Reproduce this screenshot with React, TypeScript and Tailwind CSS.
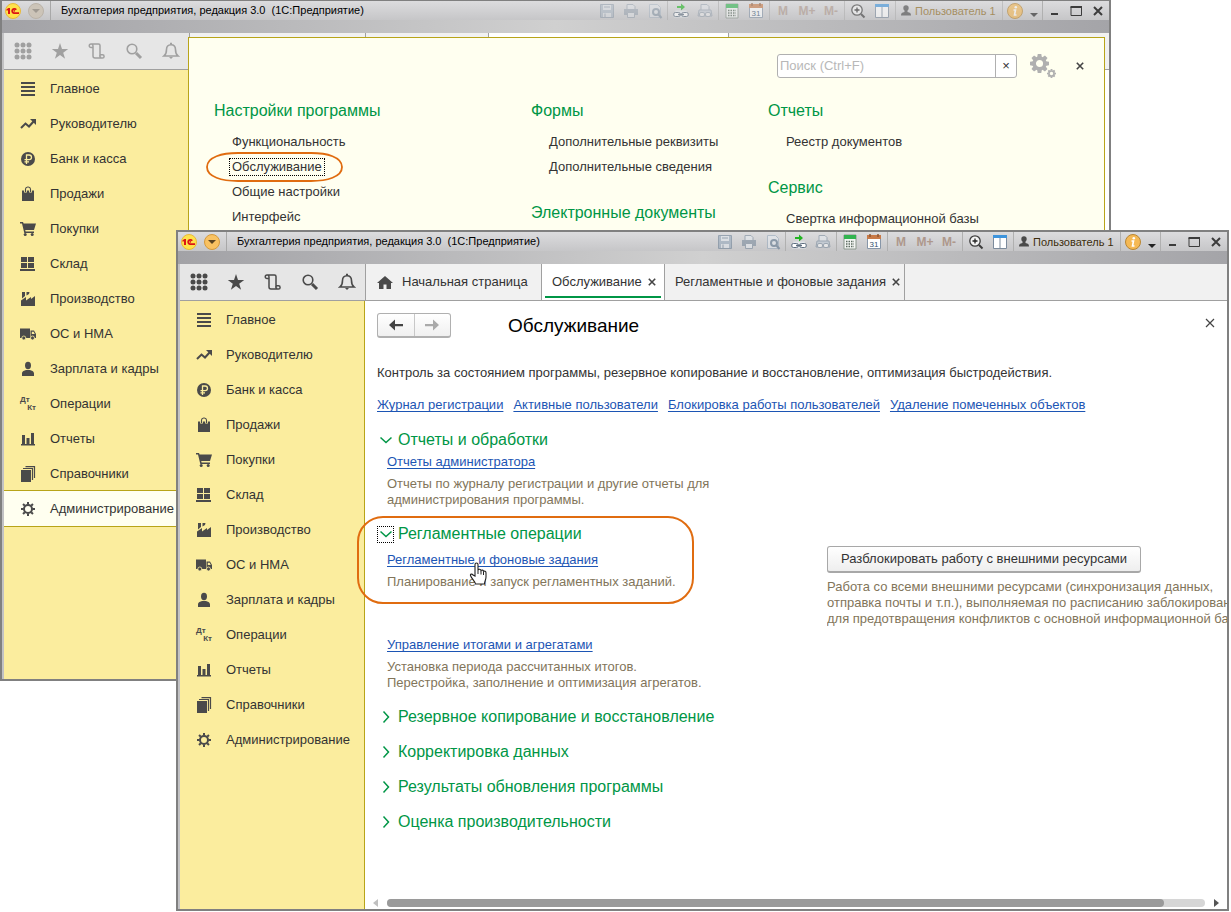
import type { ReactNode } from "react";
import clsx from "clsx";

const ICON = "#4a4a4a";

const menuItems = [
    "Главное",
    "Руководителю",
    "Банк и касса",
    "Продажи",
    "Покупки",
    "Склад",
    "Производство",
    "ОС и НМА",
    "Зарплата и кадры",
    "Операции",
    "Отчеты",
    "Справочники",
    "Администрирование",
];

const gearTeeth = [0, 45, 90, 135, 180, 225, 270, 315];

function MenuIcon({ name }: { name: string }) {
    if (name === "Операции") {
        return (
            <span className="w-4 h-4 shrink-0 flex flex-col text-[8px] leading-[8px] font-bold text-[#4a4a4a]">
                <span>Дт</span>
                <span className="self-end">Кт</span>
            </span>
        );
    }
    const shapes: Record<string, ReactNode> = {
        Главное: <path d="M1 1h14v2H1zM1 5h14v2H1zM1 9h14v2H1zM1 13h14v2H1z" />,
        Руководителю: (
            <>
                <path
                    d="M1 12 5.5 7.5 9 10.5 14 5"
                    fill="none"
                    stroke={ICON}
                    strokeWidth="2"
                />
                <path d="M10 3h6v6z" />
            </>
        ),
        "Банк и касса": (
            <>
                <circle cx="8" cy="8" r="7" />
                <path
                    d="M6.5 13V4h2.7a2.2 2.2 0 0 1 0 4.6H4.5M4.5 10.8H9"
                    fill="none"
                    stroke="#fbed9e"
                    strokeWidth="1.3"
                />
            </>
        ),
        Продажи: (
            <>
                <path d="M2 4.500h12V15H2z" />
                <path
                    d="M5.500 6.500V3a2 2 0 0 1 2-2h1a2 2 0 0 1 2 2v3.500"
                    fill="none"
                    stroke="#fbed9e"
                    strokeWidth="2.800"
                />
                <path
                    d="M5.500 6V3a2.200 2.200 0 0 1 2.200-2h.6a2.200 2.200 0 0 1 2.200 2v3"
                    fill="none"
                    stroke={ICON}
                    strokeWidth="1.100"
                />
            </>
        ),
        Покупки: (
            <>
                <path d="M0 1h3l.6 1.5H16L14 9H5.2l.4 1.5H14V12H4.3L2 2.5H0z" />
                <circle cx="5.2" cy="13.6" r="1.5" />
                <circle cx="12.2" cy="13.6" r="1.5" />
            </>
        ),
        Склад: <path d="M1 1h6v5H1zM8 1h6v5H8zM1 7h6v5H1zM8 7h6v5H8zM0 13h15v2H0z" />,
        Производство: (
            <path d="M1 15V9.500L6 6v3.500L11 6v2l4-3v10zM2 1h3v4L2 7.500zM6.500 1h3l-.5 2-2.500 1.500z" />
        ),
        "ОС и НМА": (
            <>
                <path d="M0 2.500h10V12H0zM10.500 4.500h3.500l2 3.500v4h-5.500z" />
                <path d="M11.800 5.800h1.800L14.800 8h-3z" fill="#fbed9e" />
                <circle cx="3.800" cy="12" r="2" stroke="#fbed9e" strokeWidth=".8" />
                <circle cx="12.500" cy="12" r="2" stroke="#fbed9e" strokeWidth=".8" />
            </>
        ),
        "Зарплата и кадры": (
            <>
                <ellipse cx="8" cy="4.500" rx="3" ry="3.700" />
                <path d="M2 15v-2.500C2 10 4.500 9.500 6 9h4c1.500.5 4 1 4 3.500V15z" />
            </>
        ),
        Отчеты: <path d="M2 4h3v9H2zM6.500 7h3v6h-3zM11 2h3v11h-3zM1 13h14v1.500H1z" />,
        Справочники: (
            <>
                <path d="M1 4h10v12H1z" />
                <path
                    d="M3 2.500h9.500V14M5.500.6h9V12"
                    fill="none"
                    stroke={ICON}
                    strokeWidth="1.200"
                />
            </>
        ),
        Администрирование: (
            <>
                <circle cx="8" cy="8" r="4" fill="none" stroke={ICON} strokeWidth="2" />
                {gearTeeth.map((a) => (
                    <path key={a} d="M7 1h2v2.500H7z" transform={`rotate(${a} 8 8)`} />
                ))}
            </>
        ),
    };
    return (
        <svg viewBox="0 0 16 16" className="w-4 h-4 shrink-0" fill={ICON}>
            {shapes[name]}
        </svg>
    );
}

function LogoIcon() {
    return (
        <svg viewBox="0 0 16 16" className="w-4 h-4 shrink-0">
            <circle cx="8" cy="8" r="7.500" fill="#ffe24a" stroke="#e8b93a" />
            <path d="M1.500 6.300 3.500 5H5v6H3V7.200l-1.500.6z" fill="#dc1414" />
            <path
                d="M11.200 6.800A2.200 2.200 0 1 0 9 10.200h5"
                fill="none"
                stroke="#dc1414"
                strokeWidth="1.800"
            />
            <circle cx="9.300" cy="7.900" r=".8" fill="#dc1414" />
        </svg>
    );
}

function SmallSvg({ children }: { children: ReactNode }) {
    return (
        <svg viewBox="0 0 16 16" className="w-4 h-4" fill="none">
            {children}
        </svg>
    );
}

const printer = (
    <>
        <path d="M4 6V1.500h6l2 2V6" fill="#e8eef4" stroke="#6b7f93" />
        <path d="M1 6h14v6H1z" fill="#6b7f93" />
        <path d="M4.500 9.500h7v5h-7z" fill="#e8eef4" stroke="#6b7f93" />
    </>
);

function BarButton({
    label,
    dim,
    narrow,
    children,
}: {
    label: string;
    dim?: boolean;
    narrow?: boolean;
    children: ReactNode;
}) {
    return (
        <button
            type="button"
            aria-label={label}
            className={clsx(
                "h-full flex items-center justify-center",
                narrow ? "w-[22px]" : "w-6",
                dim && "opacity-50",
            )}
        >
            {children}
        </button>
    );
}

function BarGroup({ children }: { children: ReactNode }) {
    return (
        <div className="h-full flex items-center border-l border-[#b0b0b0] px-px">
            {children}
        </div>
    );
}

function TitleBar({ active }: { active: boolean }) {
    return (
        <header className="shrink-0">
            <div className="h-[19px] flex items-center bg-linear-to-b from-[#dcdcde] to-[#c6c6c8]">
                <div className="flex items-center gap-[7px] pl-[3px] pr-1.5 h-full">
                    <LogoIcon />
                    <button
                        type="button"
                        aria-label="Главное меню"
                        className={clsx(
                            "w-4 h-4 rounded-full border flex items-center justify-center",
                            active
                                ? "bg-[#f9c262] border-[#d59a3c]"
                                : "bg-[#ccc4b8] border-[#bbb3a8]",
                        )}
                    >
                        <svg viewBox="0 0 8 4" className="w-2 h-1">
                            <path d="M0 0h8L4 4z" fill={active ? "#5c4420" : "#a09a92"} />
                        </svg>
                    </button>
                </div>
                <h1 className="flex-1 min-w-0 h-full border-l border-[#a8a8a8] pl-[10px] text-[11px] leading-[19px] whitespace-pre text-black">
                    Бухгалтерия предприятия, редакция 3.0  (1С:Предприятие)
                </h1>
                <div className="flex items-center h-full">
                    <div className={clsx("flex items-center h-full", !active && "opacity-60")}>
                        <BarButton label="Сохранить" dim>
                            <SmallSvg>
                                <path d="M1.500 1.500h13v13h-13z" fill="#8ca2b8" stroke="#5a728a" />
                                <path d="M4 2h8v5H4zM4 10h8v4H4z" fill="#e4ebf2" />
                                <path d="M5 4h6M6 10.500V14" stroke="#5a728a" />
                            </SmallSvg>
                        </BarButton>
                        <BarButton label="Печать" dim>
                            <SmallSvg>{printer}</SmallSvg>
                        </BarButton>
                        <BarButton label="Предварительный просмотр" dim>
                            <SmallSvg>
                                <path d="M2.500 1.500h8l3 3v10h-11z" fill="#e8eef4" stroke="#8ca2b8" />
                                <circle cx="9" cy="9" r="3" stroke="#48647f" strokeWidth="2" />
                                <path d="m11 11 3.500 4" stroke="#48647f" strokeWidth="2" />
                            </SmallSvg>
                        </BarButton>
                        <BarGroup>
                            <BarButton label="Получить ссылку">
                                <SmallSvg>
                                    <path d="M4 3h4V.5L12 4 8 7.500V5H4z" fill="#22b422" />
                                    <path d="M2.500 7.500h11l1.500 7H1z" fill="#e4e8ec" />
                                    <rect x=".8" y="9.500" width="6.400" height="4" rx="1.500" fill="#fff" stroke="#5f6f80" />
                                    <rect x="8.800" y="9.500" width="6.400" height="4" rx="1.500" fill="#fff" stroke="#5f6f80" />
                                    <path d="M5 11.500h6" stroke="#5f6f80" strokeWidth="1.500" />
                                </SmallSvg>
                            </BarButton>
                            <BarButton label="Перейти по ссылке" dim>
                                <SmallSvg>
                                    <path d="M4 7V1.500h6l2 2V7" fill="#e8eef4" stroke="#6b7f93" />
                                    <path d="M2 7h12l1 6H1z" fill="#b8c6d4" stroke="#6b7f93" />
                                    <rect x="2.500" y="9.500" width="5" height="4" rx="1.500" fill="#fff" stroke="#6b7f93" />
                                    <rect x="8.500" y="9.500" width="5" height="4" rx="1.500" fill="#fff" stroke="#6b7f93" />
                                </SmallSvg>
                            </BarButton>
                        </BarGroup>
                        <BarGroup>
                            <BarButton label="Калькулятор">
                                <SmallSvg>
                                    <path d="M2 1h12v14H2z" fill="#f4f6f4" stroke="#8a968c" />
                                    <path d="M2 1h12v4H2z" fill="#32b450" />
                                    <path
                                        d="M4 7.500h8M4 10h8M4 12.500h8"
                                        stroke="#5a6a5e"
                                        strokeWidth="1.400"
                                        strokeDasharray="1.500 1"
                                    />
                                </SmallSvg>
                            </BarButton>
                            <BarButton label="Календарь">
                                <SmallSvg>
                                    <path d="M1.500 2.500h13v12h-13z" fill="#fff" stroke="#8796a8" />
                                    <path d="M1 1h14v4H1z" fill="#c87a48" />
                                    <path d="M4 0v3M12 0v3" stroke="#8d5632" strokeWidth="1.500" />
                                    <text x="8" y="13" textAnchor="middle" fontSize="8" fill="#34506e">
                                        31
                                    </text>
                                </SmallSvg>
                            </BarButton>
                        </BarGroup>
                        <BarGroup>
                            {["M", "M+", "M-"].map((m) => (
                                <BarButton key={m} label={m}>
                                    <span className="text-xs font-bold text-[#ae988c]">{m}</span>
                                </BarButton>
                            ))}
                        </BarGroup>
                        <BarGroup>
                            <BarButton label="Масштаб">
                                <SmallSvg>
                                    <circle cx="7" cy="7" r="5.200" fill="#f4f4f4" stroke="#3c3c3c" strokeWidth="1.300" />
                                    <path d="M4.500 7h5M7 4.500v5" stroke="#222" strokeWidth="1.300" />
                                    <path d="m11 11 3.500 3.500" stroke="#3c3c3c" strokeWidth="2" />
                                </SmallSvg>
                            </BarButton>
                            <BarButton label="Панели">
                                <SmallSvg>
                                    <path d="M1.500 1.500h13v13h-13z" fill="#fff" stroke="#7c8b9c" />
                                    <path d="M1 1h14v3H1z" fill="#3e94dc" />
                                    <path d="M8 4v10" stroke="#7c8b9c" />
                                </SmallSvg>
                            </BarButton>
                        </BarGroup>
                        <BarGroup>
                            <button
                                type="button"
                                className={clsx(
                                    "w-[104px] flex items-center gap-1 pl-1 text-[11px] whitespace-nowrap",
                                    active ? "text-[#3c2d0c]" : "text-[#8a6410]",
                                )}
                            >
                                <svg viewBox="0 0 10 12" className="w-[10px] h-3 shrink-0" fill="#4a4a4a">
                                    <circle cx="5" cy="3" r="2.700" />
                                    <path d="M3.500 5h3v2C9 7.500 10 8 10 10.500H0C0 8 1 7.500 3.500 7z" />
                                </svg>
                                Пользователь 1
                            </button>
                        </BarGroup>
                        <BarGroup>
                            <BarButton label="О программе" narrow>
                                <svg viewBox="0 0 16 16" className="w-4 h-4">
                                    <circle cx="8" cy="8" r="7.500" fill="#f5b955" stroke="#b98632" />
                                    <circle cx="8.800" cy="4.200" r="1.300" fill="#fff" />
                                    <path d="M6.500 7h2L7.500 12H9.500" fill="none" stroke="#fff" strokeWidth="1.600" />
                                </svg>
                            </BarButton>
                            <button type="button" aria-label="Еще" className="w-[15px] h-full flex items-end justify-center pb-[3px]">
                                <svg viewBox="0 0 8 4" className="w-2 h-1">
                                    <path d="M0 0h8L4 4z" fill="#222" />
                                </svg>
                            </button>
                        </BarGroup>
                    </div>
                    <div className="h-full flex items-center border-l border-[#b0b0b0]">
                        <BarButton label="Свернуть" narrow>
                            <SmallSvg>
                                <path d="M5 11h7" stroke="#3c3c3c" strokeWidth="2" />
                            </SmallSvg>
                        </BarButton>
                        <BarButton label="Развернуть" narrow>
                            <SmallSvg>
                                <path d="M3 4h10.500v8.500H3z" stroke="#3c3c3c" />
                                <path d="M2.500 4h11.500" stroke="#3c3c3c" strokeWidth="2" />
                            </SmallSvg>
                        </BarButton>
                        <BarButton label="Закрыть" narrow>
                            <SmallSvg>
                                <path d="m4 4 8 8M12 4l-8 8" stroke="#3c3c3c" strokeWidth="2" />
                            </SmallSvg>
                        </BarButton>
                    </div>
                </div>
            </div>
            <div className="h-[13px] bg-linear-to-r from-[#a2a2a6] via-[#d0d0d0] to-[#a4a4a8]" />
        </header>
    );
}

const toolIcons: { label: string; shape: ReactNode }[] = [
    {
        label: "Меню функций",
        shape: [3, 9, 15].map((y) =>
            [3, 9, 15].map((x) => (
                <circle key={`${x}-${y}`} cx={x} cy={y} r="2.500" fill="currentColor" />
            )),
        ),
    },
    {
        label: "Избранное",
        shape: (
            <path
                d="m9 1 2 6h6.200l-5 3.700 1.900 6L9 13l-5.100 3.700 1.900-6L.8 7H7z"
                fill="currentColor"
            />
        ),
    },
    {
        label: "История",
        shape: (
            <path
                d="M5 5.500H3a1.700 1.700 0 0 1 0-3.500h7.500A1.500 1.500 0 0 1 12 3.500V13M5 5.500V14a2 2 0 0 0 2 2h7.500a1.600 1.600 0 0 0 0-3.200H12M4 2.200A2 2 0 0 1 5 4v2M12 13a2 2 0 0 0 1 2.500"
                fill="none"
                stroke="currentColor"
                strokeWidth="1.500"
            />
        ),
    },
    {
        label: "Поиск",
        shape: (
            <>
                <circle cx="7" cy="7" r="4.800" fill="none" stroke="currentColor" strokeWidth="1.600" />
                <path d="m11 11 5 5" stroke="currentColor" strokeWidth="3" />
            </>
        ),
    },
    {
        label: "Оповещения",
        shape: (
            <>
                <path
                    d="M2 14h14c-2-1.500-2.500-3-2.500-6.500C13.500 4.500 12 2.700 9 2.700S4.500 4.500 4.500 7.500C4.500 11 4 12.500 2 14z"
                    fill="none"
                    stroke="currentColor"
                    strokeWidth="1.600"
                />
                <path d="M8 .8h2v2H8zM7 15h4l-2 2z" fill="currentColor" />
            </>
        ),
    },
];

function ToolIcons({ active }: { active: boolean }) {
    return (
        <div
            className={clsx(
                "w-[185px] shrink-0 flex bg-[#e6e6e6]",
                active ? "text-[#4a4a4a]" : "text-[#a0a0a0]",
            )}
        >
            {toolIcons.map((t) => (
                <button
                    key={t.label}
                    type="button"
                    aria-label={t.label}
                    className="w-[37px] flex items-center justify-center"
                >
                    <svg viewBox="0 0 18 18" className="w-[18px] h-[18px]">
                        {t.shape}
                    </svg>
                </button>
            ))}
        </div>
    );
}

function Sidebar({ selected }: { selected?: string }) {
    return (
        <nav className="w-[185px] shrink-0 bg-[#fbed9e] border-r border-[#b8a419] pt-px">
            {menuItems.map((item) => (
                <a
                    key={item}
                    href="#"
                    className={clsx(
                        "flex items-center gap-3.5 pl-4 whitespace-nowrap",
                        item === selected
                            ? "h-[37px] -my-px bg-[#fffff0] border-y border-[#b8a419]"
                            : "h-[35px]",
                    )}
                >
                    <MenuIcon name={item} />
                    {item}
                </a>
            ))}
        </nav>
    );
}

function AppWindow({
    active,
    selected,
    className,
    tabs,
    children,
}: {
    active: boolean;
    selected?: string;
    className: string;
    tabs: ReactNode;
    children?: ReactNode;
}) {
    return (
        <section
            className={clsx(
                "absolute flex flex-col border-2 border-[#808080] bg-white",
                className,
            )}
        >
            <TitleBar active={active} />
            <div className="relative flex-1 flex flex-col border-l-2 border-[#c2c2c4]">
                <div className="h-[37px] shrink-0 flex border-b border-[#a0a0a0]">
                    <ToolIcons active={active} />
                    <div className="flex-1 flex bg-[#f1f1f1] border-l border-[#a0a0a0]">
                        {tabs}
                    </div>
                </div>
                <div className="flex-1 flex">
                    <Sidebar selected={selected} />
                    {children}
                </div>
            </div>
        </section>
    );
}

function CloseIcon({ bold, small }: { bold?: boolean; small?: boolean }) {
    return (
        <svg viewBox="0 0 10 10" className={small ? "w-2 h-2" : "w-[10px] h-[10px]"}>
            <path
                d="m1 1 8 8M9 1 1 9"
                stroke="#444"
                strokeWidth={bold ? 2 : 1.2}
            />
        </svg>
    );
}

function CommandGroup({
    title,
    items,
    focused,
}: {
    title: string;
    items: string[];
    focused?: string;
}) {
    return (
        <div className="mb-6">
            <h2 className="text-base leading-5 text-[#009646] mb-2">{title}</h2>
            <ul className="pl-[18px]">
                {items.map((item) => (
                    <li key={item} className="relative h-[25px] flex items-center">
                        <a
                            href="#"
                            className={clsx(
                                item === focused &&
                                    "-mx-[3px] px-[2px] border border-dotted border-black leading-4",
                            )}
                        >
                            {item}
                        </a>
                        {item === focused && (
                            <svg
                                viewBox="0 0 137 30"
                                className="absolute -left-[26px] -top-0.5 w-[137px] h-[30px]"
                            >
                                <path
                                    d="M32 1h73c16 0 31 4 31 14s-15 14-31 14H32C16 29 1 25 1 15S16 1 32 1z"
                                    fill="none"
                                    stroke="#e06c10"
                                    strokeWidth="1.800"
                                />
                            </svg>
                        )}
                    </li>
                ))}
            </ul>
        </div>
    );
}

function Gear({ className }: { className: string }) {
    return (
        <svg viewBox="0 0 16 16" className={className} fill="#b0b0b0">
            <circle cx="8" cy="8" r="4.500" fill="none" stroke="#b0b0b0" strokeWidth="3" />
            {gearTeeth.map((a) => (
                <path key={a} d="M6.500 0h3l.5 3H6z" transform={`rotate(${a} 8 8)`} />
            ))}
        </svg>
    );
}

function FunctionsPanel() {
    return (
        <div className="absolute left-[184px] right-1 top-1 h-[400px] bg-[#fffff0] border border-[#b8a419] pl-[25px] pt-4">
            <div className="flex justify-end items-center pr-5">
                <div className="w-[240px] h-6 flex bg-white border border-[#b0b0b0] rounded-[3px]">
                    <input
                        type="text"
                        aria-label="Поиск"
                        placeholder="Поиск (Ctrl+F)"
                        className="flex-1 min-w-0 px-0.5 outline-none placeholder:text-[#b8b8b8]"
                    />
                    <button
                        type="button"
                        aria-label="Очистить"
                        className="w-[21px] border-l border-[#b0b0b0] leading-5"
                    >
                        ×
                    </button>
                </div>
                <button type="button" aria-label="Настройка" className="relative ml-3 w-[27px] h-6">
                    <Gear className="absolute left-px top-0 w-[19px] h-[19px]" />
                    <Gear className="absolute right-0 bottom-0 w-[9px] h-[9px]" />
                </button>
                <button type="button" aria-label="Закрыть" className="ml-5">
                    <CloseIcon bold small />
                </button>
            </div>
            <div className="mt-[23px] grid grid-cols-[317px_237px_1fr]">
                <CommandGroup
                    title="Настройки программы"
                    items={["Функциональность", "Обслуживание", "Общие настройки", "Интерфейс"]}
                    focused="Обслуживание"
                />
                <div>
                    <CommandGroup
                        title="Формы"
                        items={["Дополнительные реквизиты", "Дополнительные сведения"]}
                    />
                    <CommandGroup title="Электронные документы" items={[]} />
                </div>
                <div>
                    <CommandGroup title="Отчеты" items={["Реестр документов"]} />
                    <CommandGroup title="Сервис" items={["Свертка информационной базы"]} />
                </div>
            </div>
        </div>
    );
}

function Link({ children }: { children: ReactNode }) {
    return (
        <a
            href="#"
            className="text-[#1c55b4] underline decoration-1 underline-offset-2 [text-decoration-skip-ink:none] whitespace-nowrap"
        >
            {children}
        </a>
    );
}

function SectionTitle({
    open,
    focused,
    children,
}: {
    open?: boolean;
    focused?: boolean;
    children: ReactNode;
}) {
    return (
        <h3>
            <button
                type="button"
                aria-expanded={!!open}
                className="flex items-center gap-1 text-base leading-5 text-[#009646]"
            >
                <span
                    className={clsx(
                        "w-[17px] h-[17px] flex items-center justify-center border border-dotted",
                        focused ? "border-black" : "border-transparent",
                    )}
                >
                    <svg viewBox="0 0 14 14" className="w-3.5 h-3.5 shrink-0">
                        <path
                            d={open ? "m1.500 4.500 5.500 5 5.500-5" : "m4.500 1.500 5 5.500-5 5.500"}
                            fill="none"
                            stroke="#009646"
                            strokeWidth="1.500"
                        />
                    </svg>
                </span>
                {children}
            </button>
        </h3>
    );
}

function HandCursor() {
    return (
        <svg viewBox="0 0 18 23" className="absolute left-[92px] top-[38px] w-[18px] h-[23px]">
            <path
                d="M6 14V2.500a1.500 1.500 0 0 1 3 0V8c.5-1 2.500-1 3 .5.800-.8 2.300-.5 2.500.8 1-.5 2.500 0 2.500 1.500V15c0 3-1.500 4-1.500 7h-9c0-2-4-5.500-5-8.500-.5-1.500 1.500-2 2.500-.5z"
                fill="#fff"
                stroke="#222"
                strokeWidth="1.100"
            />
            <path d="M9 8v4M12 9v3.500M14.500 10v3" stroke="#222" />
        </svg>
    );
}

function MaintenancePage() {
    return (
        <main className="flex-1 min-w-0 flex flex-col pl-3 pt-3">
            <div className="flex items-center h-[25px]">
                <div className="flex w-[74px] h-[25px] rounded-[3px] border border-[#b0b0b0] border-b-2 bg-linear-to-b from-white to-[#f0f0f0]">
                    <button type="button" aria-label="Назад" className="flex-1 flex items-center justify-center border-r border-[#c8c8c8]">
                        <svg viewBox="0 0 14 12" className="w-3.5 h-3">
                            <path d="M0 6 6 .5V5h8v2.200H6v4.300z" fill="#444" />
                        </svg>
                    </button>
                    <button type="button" aria-label="Вперед" className="flex-1 flex items-center justify-center">
                        <svg viewBox="0 0 14 12" className="w-3.5 h-3">
                            <path d="M14 6 8 .5V5H0v2.200h8v4.300z" fill="#aaa" />
                        </svg>
                    </button>
                </div>
                <h2 className="ml-[57px] text-[19px] leading-6 text-black">Обслуживание</h2>
                <button type="button" aria-label="Закрыть" className="ml-auto mr-3 mb-1.5">
                    <CloseIcon />
                </button>
            </div>
            <p className="mt-[27px] whitespace-nowrap">
                Контроль за состоянием программы, резервное копирование и восстановление, оптимизация
                быстродействия.
            </p>
            <div className="mt-4 flex gap-[10px]">
                <Link>Журнал регистрации</Link>
                <Link>Активные пользователи</Link>
                <Link>Блокировка работы пользователей</Link>
                <Link>Удаление помеченных объектов</Link>
            </div>

            <div className="mt-[17px]">
                <SectionTitle open>Отчеты и обработки</SectionTitle>
                <div className="pl-[10px] mt-1">
                    <Link>Отчеты администратора</Link>
                    <p className="mt-1.5 text-[#82755a]">
                        Отчеты по журналу регистрации и другие отчеты для
                        <br />
                        администрирования программы.
                    </p>
                </div>
            </div>

            <div className="relative mt-4">
                <SectionTitle open focused>
                    Регламентные операции
                </SectionTitle>
                <div className="flex">
                    <div className="w-[450px] shrink-0 pl-[10px] pt-2">
                        <Link>Регламентные и фоновые задания</Link>
                        <p className="mt-1.5 text-[#82755a]">Планирование и запуск регламентных заданий.</p>
                    </div>
                    <div className="flex-1 min-w-0 overflow-hidden pt-0.5">
                        <button
                            type="button"
                            className="h-[27px] px-[13px] rounded-[3px] border border-b-2 border-[#a8a8a8] bg-linear-to-b from-white to-[#eeeeee] whitespace-nowrap"
                        >
                            Разблокировать работу с внешними ресурсами
                        </button>
                        <p className="mt-1.5 text-[#82755a] whitespace-nowrap">
                            Работа со всеми внешними ресурсами (синхронизация данных,
                            <br />
                            отправка почты и т.п.), выполняемая по расписанию заблокирована
                            <br />
                            для предотвращения конфликтов с основной информационной базой
                        </p>
                    </div>
                </div>
                <div className="absolute -left-5 -top-2 w-[337px] h-[88px] rounded-[26px] border-2 border-[#e06c10] pointer-events-none" />
                <HandCursor />
            </div>

            <div className="pl-[10px] mt-[10px]">
                <Link>Управление итогами и агрегатами</Link>
                <p className="mt-1.5 text-[#82755a]">
                    Установка периода рассчитанных итогов.
                    <br />
                    Перестройка, заполнение и оптимизация агрегатов.
                </p>
            </div>

            <div className="mt-4 flex flex-col gap-[15px]">
                <SectionTitle>Резервное копирование и восстановление</SectionTitle>
                <SectionTitle>Корректировка данных</SectionTitle>
                <SectionTitle>Результаты обновления программы</SectionTitle>
                <SectionTitle>Оценка производительности</SectionTitle>
            </div>

            {/* Horizontal scroll bar */}
            <div className="mt-auto mb-0.5 -ml-1 mr-2 flex items-center gap-[9px]">
                <svg viewBox="0 0 5 8" className="w-[5px] h-2 shrink-0">
                    <path d="M5 0v8L0 4z" fill="#c0c0c0" />
                </svg>
                <div className="flex-1 h-2 rounded-full bg-[#d6d6d6]">
                    <div className="w-[95%] h-full rounded-full bg-[#9a9a9a]" />
                </div>
                <svg viewBox="0 0 5 8" className="w-[5px] h-2 shrink-0">
                    <path d="M0 0v8l5-4z" fill="#555" />
                </svg>
            </div>
        </main>
    );
}

function Tab({
    current,
    closable,
    className,
    children,
}: {
    current?: boolean;
    closable?: boolean;
    className?: string;
    children?: ReactNode;
}) {
    return (
        <div
            className={clsx(
                "relative flex items-center gap-1.5 border-r border-[#a0a0a0] whitespace-nowrap",
                current && "bg-white",
                className,
            )}
        >
            <button type="button" className="flex items-center gap-[9px]">
                {children}
            </button>
            {closable && (
                <button type="button" aria-label="Закрыть вкладку">
                    <CloseIcon bold small />
                </button>
            )}
            {current && (
                <span className="absolute left-[3px] right-[3px] bottom-0.5 h-0.5 bg-[#009646]" />
            )}
        </div>
    );
}

export default function App() {
    return (
        <div className="relative min-h-[912px] overflow-hidden bg-white text-[13px] leading-4 text-[#333] font-['Liberation_Sans',Arial,sans-serif]">
            <AppWindow
                active={false}
                selected="Администрирование"
                className="left-0 right-[120px] -top-px h-[682px]"
                tabs={
                    <>
                        <Tab className="w-[176px]" />
                        <Tab className="w-[123px]" />
                        <Tab className="w-[240px] bg-white" />
                    </>
                }
            >
                <FunctionsPanel />
            </AppWindow>
            <AppWindow
                active
                className="left-[176px] right-0.5 top-[230px] h-[681px]"
                tabs={
                    <>
                        <Tab className="w-[176px] pl-[11px]">
                            <svg viewBox="0 0 16 14" className="w-4 h-3.5" fill={ICON}>
                                <path d="M8 1 0 8h2v6h4.500V9.500h3V14H14V8h2z" />
                            </svg>
                            Начальная страница
                        </Tab>
                        <Tab current closable className="w-[123px] pl-[10px]">
                            Обслуживание
                        </Tab>
                        <Tab closable className="w-[240px] pl-[10px]">
                            Регламентные и фоновые задания
                        </Tab>
                    </>
                }
            >
                <MaintenancePage />
            </AppWindow>
        </div>
    );
}
